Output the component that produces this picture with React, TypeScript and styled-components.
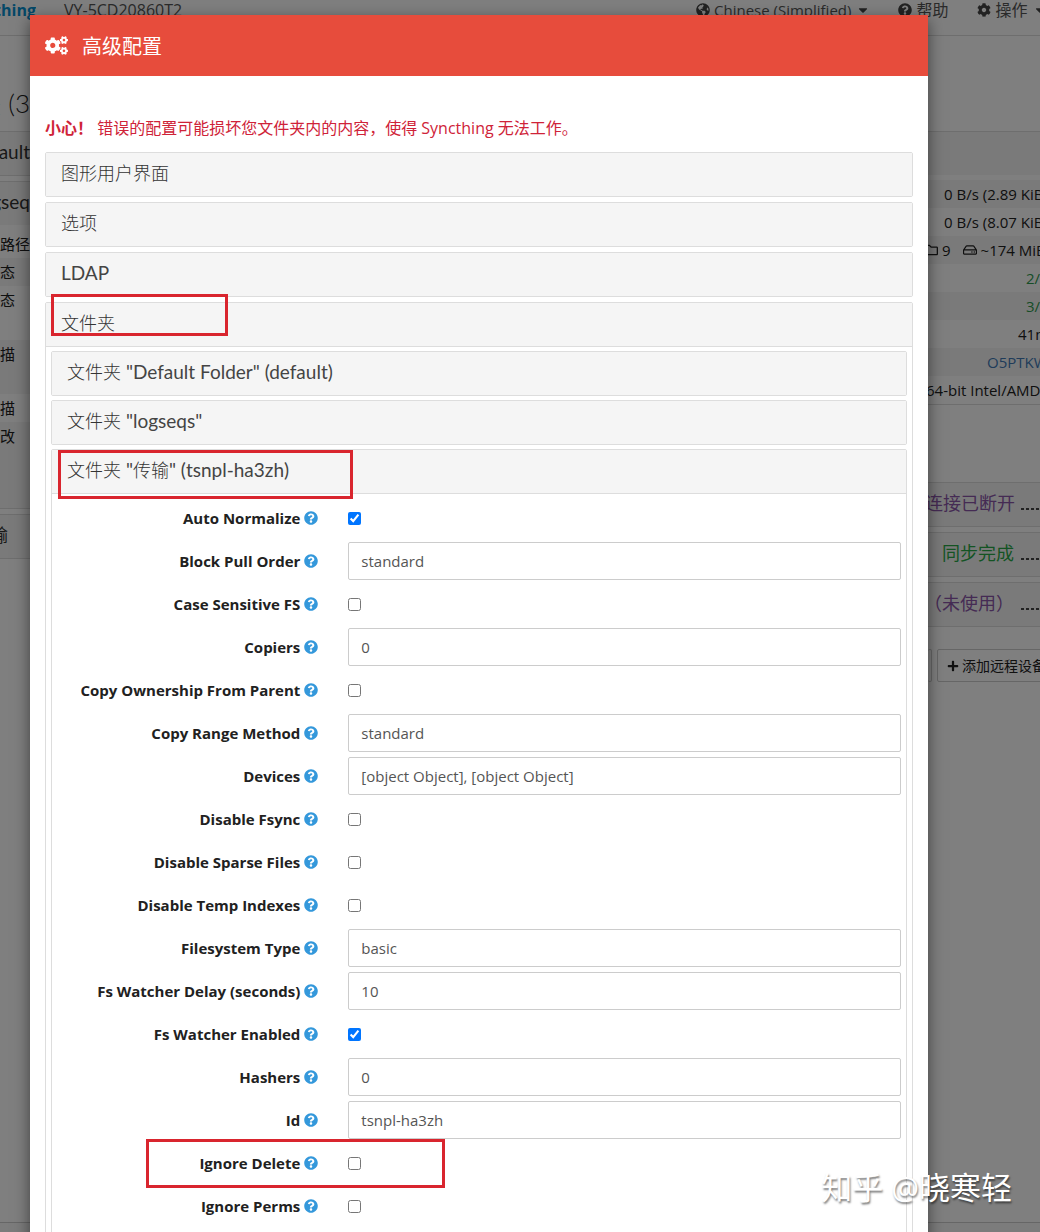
import React from "react";
import styled, { createGlobalStyle } from "styled-components";
import {
  FaCaretDown,
  FaCog,
  FaCogs,
  FaGlobeAmericas,
  FaPlus,
  FaQuestionCircle,
  FaRegFolder,
  FaRegHdd,
} from "react-icons/fa";

const bodyFont = `"Open Sans", "Noto Sans CJK SC", sans-serif`;
const headingFont = `Lato, "Noto Sans CJK SC", sans-serif`;

const GlobalStyle = createGlobalStyle`
  *, *::before, *::after { box-sizing: border-box; }
  body {
    margin: 0;
    background: #fff;
    color: #212121;
    font: 15px/20px ${bodyFont};
  }
  h1, h2, h3, h4, p { margin: 0; }
`;

const Page = styled.div`
  position: relative;
  height: 100vh;
  overflow: hidden;
`;

/* ---------- page behind the dialog ---------- */

const Backdrop = styled.div`
  display: flex;
  flex-direction: column;
  height: 100%;
  overflow: hidden;
  white-space: nowrap;
`;

const Navbar = styled.nav`
  display: flex;
  flex: none;
  align-items: flex-start;
  height: 36px;
  border-bottom: 1px solid #ddd;
  font-size: 16px;
`;

const Brand = styled.a`
  display: flex;
  justify-content: flex-end;
  width: 36px;
  overflow: hidden;
  color: #0891d1;
  font-weight: 700;
  text-decoration: none;
`;

const DeviceName = styled.span`
  flex: 1;
  padding-left: 28px;
  color: #555;
  font-size: 16px;
`;

const NavMenu = styled.div`
  display: flex;
  gap: 29px;
  width: 344px;
`;

const NavLink = styled.a`
  display: flex;
  flex: none;
  align-items: center;
  gap: 4px;
  color: #555;
  font-size: ${(p: { $small?: boolean }) => (p.$small ? 15 : 16)}px;
  text-decoration: none;
  svg { width: 14px; height: 14px; color: #444; }
  svg:last-child:not(:first-child) { width: 12px; margin-left: 2px; }
`;

const Columns = styled.div`
  display: grid;
  grid-template-columns: 30px minmax(0, 1fr) 112px;
  flex: 1;
`;

const Column = styled.section`
  grid-column: ${(p: { $at: number }) => p.$at};
  display: flex;
  flex-direction: column;
  min-width: 0;
  overflow: hidden;
`;

const ColumnTitle = styled.h3`
  display: flex;
  align-items: center;
  justify-content: flex-end;
  height: 95px;
  padding-top: 38px;
  font: 300 26px/40px ${headingFont};
`;

const BackPanel = styled.div`
  flex: none;
  margin-bottom: 5px;
  border: solid #ddd;
  border-width: 1px 0;
`;

const BackHeading = styled.h4`
  display: flex;
  align-items: center;
  justify-content: ${(p: { $end?: boolean; $tone?: string; $indent?: number }) =>
    p.$end ? "flex-end" : "flex-start"};
  height: 43px;
  padding-bottom: 4px;
  text-indent: ${(p) => p.$indent ?? 0}px;
  background: #f5f5f5;
  color: ${(p) => p.$tone ?? "#333"};
  font: 400 ${(p) => (p.$end ? 19 : 18)}px/20px ${headingFont};
`;

const BackRow = styled.div`
  display: flex;
  align-items: ${(p: { $tall?: boolean; $stripe?: boolean; $indent?: number; $tone?: string }) =>
    p.$tall ? "flex-start" : "center"};
  gap: 4px;
  height: ${(p) => (p.$tall ? 54 : 28)}px;
  padding-top: ${(p) => (p.$tall ? 4 : 0)}px;
  text-indent: ${(p) => p.$indent ?? 0}px;
  background: ${(p) => (p.$stripe ? "#f5f5f5" : "#fff")};
  color: ${(p) => p.$tone ?? "#212121"};
  svg { flex: none; width: 14px; height: 14px; }
  svg:first-child { margin-left: -4px; }
  svg:not(:first-child) { margin-left: 8px; }
`;

const BackTable = styled.div`
  padding-top: 5px;
`;

const PanelFooter = styled.div`
  height: 58px;
  background: #f5f5f5;
`;

const Progress = styled.span`
  width: 18px;
  height: 2px;
  margin: 12px 1px 0 auto;
  background: repeating-linear-gradient(90deg, #444 0 3px, transparent 3px 5px);
`;

const Space = styled.div`
  flex: none;
  height: ${(p: { $size: number }) => p.$size}px;
`;

const ButtonBar = styled.div`
  display: flex;
  gap: 5px;
  padding-top: 17px;
`;

const BackButton = styled.button`
  display: flex;
  flex: none;
  align-items: center;
  gap: 3px;
  height: 33px;
  padding: 0 9px;
  border: 1px solid #ccc;
  border-radius: 2px;
  background: #fff;
  color: #222;
  font: 14px/20px ${bodyFont};
  white-space: nowrap;
  &:first-child { width: 4px; padding: 0; border-left: 0; }
  svg { width: 12px; height: 12px; }
`;

const BottomBar = styled.footer`
  flex: none;
  height: 10px;
  border-top: 1px solid #ccc;
  background: #f8f8f8;
`;

/* ---------- dialog ---------- */

const Shade = styled.div`
  position: absolute;
  inset: 0;
  overflow: hidden;
  background: rgba(0, 0, 0, 0.5);
`;

const Dialog = styled.div`
  margin: 15px 112px 0 30px;
  background: #fff;
  box-shadow: 0 5px 15px rgba(0, 0, 0, 0.5);
`;

const DialogHeader = styled.header`
  display: flex;
  align-items: center;
  gap: 14px;
  height: 61px;
  padding: 0 15px;
  background: #e74c3c;
  color: #fff;
  svg { width: 23px; height: 23px; }
`;

const DialogTitle = styled.h2`
  font: 400 20px/24px ${headingFont};
`;

const DialogBody = styled.div`
  padding: 41px 15px 0;
`;

const Warning = styled.p`
  margin-bottom: 13px;
  color: #cf2338;
  font-size: 16px;
  line-height: 22px;
`;

const PanelStack = styled.div`
  display: flex;
  flex-direction: column;
  gap: ${(p: { $nested?: boolean }) => (p.$nested ? 4 : 5)}px;
  padding: ${(p) => (p.$nested ? "4px 5px 0" : "0")};
`;

const Panel = styled.section`
  border: 1px solid #ddd;
  border-radius: 2px;
`;

const PanelHeading = styled.h4`
  position: relative;
  background: #f5f5f5;
  border-bottom: ${(p: { $open?: boolean }) => (p.$open ? "1px solid #ddd" : "0")};
`;

const PanelToggle = styled.button`
  display: block;
  width: 100%;
  height: 43px;
  padding: 0 15px 4px;
  border: 0;
  background: none;
  color: #333;
  font: 300 18px/20px ${headingFont};
  text-align: left;
`;

const Latin = styled.span`
  color: #444;
  font-size: 19px;
  font-weight: 400;
`;

const Form = styled.form`
  display: flex;
  flex-direction: column;
  gap: 5px;
  padding: 5px 5px 40px;
`;

const FieldRow = styled.div`
  position: relative;
  display: grid;
  grid-template-columns: 4fr 8fr;
  align-items: center;
  height: 38px;
  margin: 0 -15px;
`;

const FieldName = styled.div`
  display: flex;
  align-items: center;
  justify-content: flex-end;
  gap: 4px;
  padding: 0 15px;
  color: #212121;
  font-weight: 700;
  white-space: nowrap;
`;

const HelpLink = styled.a`
  display: flex;
  color: #3498db;
  svg { width: 14px; height: 14px; }
`;

const FieldControl = styled.div`
  display: flex;
  padding: 0 15px;
`;

const TextInput = styled.input`
  width: 100%;
  height: 38px;
  padding: 0 12px;
  border: 1px solid #ccc;
  border-radius: 2px;
  background: #fff;
  color: #555;
  font: 15px/20px ${bodyFont};
`;

const Tick = styled.input`
  width: 13px;
  height: 13px;
  margin: 0;
`;

const Mark = styled.span`
  position: absolute;
  z-index: 1;
  left: ${(p: { $box: [number, number, number, number] }) => p.$box[0]}px;
  top: ${(p) => p.$box[1]}px;
  width: ${(p) => p.$box[2]}px;
  height: ${(p) => p.$box[3]}px;
  border: 3px solid #d9252e;
  pointer-events: none;
`;

const Watermark = styled.div`
  position: absolute;
  right: 28px;
  bottom: 25px;
  color: #fff;
  font: 400 31px/40px ${bodyFont};
  text-shadow: 1px 2px 2px rgba(0, 0, 0, 0.5);
`;

type Field = { name: string; value: string | boolean; marked?: boolean };

const fields: Field[] = [
  { name: "Auto Normalize", value: true },
  { name: "Block Pull Order", value: "standard" },
  { name: "Case Sensitive FS", value: false },
  { name: "Copiers", value: "0" },
  { name: "Copy Ownership From Parent", value: false },
  { name: "Copy Range Method", value: "standard" },
  { name: "Devices", value: "[object Object], [object Object]" },
  { name: "Disable Fsync", value: false },
  { name: "Disable Sparse Files", value: false },
  { name: "Disable Temp Indexes", value: false },
  { name: "Filesystem Type", value: "basic" },
  { name: "Fs Watcher Delay (seconds)", value: "10" },
  { name: "Fs Watcher Enabled", value: true },
  { name: "Hashers", value: "0" },
  { name: "Id", value: "tsnpl-ha3zh" },
  { name: "Ignore Delete", value: false, marked: true },
  { name: "Ignore Perms", value: false },
];

function SettingField({ field }: { field: Field }) {
  const id = field.name.toLowerCase().replace(/[^a-z]+/g, "-");
  return (
    <FieldRow>
      <FieldName>
        <label htmlFor={id}>{field.name}</label>
        <HelpLink href="#" aria-label={`Help: ${field.name}`}>
          <FaQuestionCircle />
        </HelpLink>
      </FieldName>
      <FieldControl>
        {typeof field.value === "boolean" ? (
          <Tick id={id} type="checkbox" defaultChecked={field.value} />
        ) : (
          <TextInput id={id} type="text" defaultValue={field.value} />
        )}
      </FieldControl>
      {field.marked && <Mark $box={[104, -5, 299, 49]} />}
    </FieldRow>
  );
}

function SettingsPanel({
  title,
  mark,
  children,
}: {
  title: React.ReactNode;
  mark?: [number, number, number, number];
  children?: React.ReactNode;
}) {
  return (
    <Panel>
      <PanelHeading $open={!!children}>
        <PanelToggle type="button">{title}</PanelToggle>
        {mark && <Mark $box={mark} />}
      </PanelHeading>
      {children}
    </Panel>
  );
}

function FoldersColumn() {
  return (
    <Column $at={1}>
      <ColumnTitle>文件夹 (3</ColumnTitle>
      <BackPanel>
        <BackHeading $end>Default</BackHeading>
      </BackPanel>
      <BackPanel>
        <BackHeading $end>logseq</BackHeading>
        <BackTable>
          <BackRow>路径</BackRow>
          <BackRow $stripe>态</BackRow>
          <BackRow $tall>态</BackRow>
          <BackRow $tall $stripe>描</BackRow>
          <BackRow>描</BackRow>
          <BackRow $stripe>改</BackRow>
        </BackTable>
        <PanelFooter />
      </BackPanel>
      <BackPanel>
        <BackHeading $indent={-10}>输</BackHeading>
      </BackPanel>
    </Column>
  );
}

function DevicesColumn() {
  return (
    <Column $at={3}>
      <Space $size={95} />
      <BackPanel>
        <BackHeading />
        <BackTable>
          <BackRow $stripe $indent={16}>0 B/s (2.89 KiB</BackRow>
          <BackRow $indent={16}>0 B/s (8.07 KiB</BackRow>
          <BackRow $stripe>
            <FaRegFolder />9<FaRegHdd />~174 MiB
          </BackRow>
          <BackRow $indent={98} $tone="#2e9a4f">2/3</BackRow>
          <BackRow $stripe $indent={98} $tone="#2e9a4f">3/3</BackRow>
          <BackRow $indent={90}>41m</BackRow>
          <BackRow $stripe $indent={59} $tone="#4179b5">O5PTKW</BackRow>
          <BackRow $indent={-2}>64-bit Intel/AMD</BackRow>
        </BackTable>
      </BackPanel>
      <Space $size={72} />
      <BackPanel>
        <BackHeading $tone="#8a56a8" $indent={-3}>连接已断开<Progress /></BackHeading>
      </BackPanel>
      <BackPanel>
        <BackHeading $tone="#29a847" $indent={14}>同步完成<Progress /></BackHeading>
      </BackPanel>
      <BackPanel>
        <BackHeading $tone="#8a56a8" $indent={-4}>（未使用）<Progress /></BackHeading>
      </BackPanel>
      <ButtonBar>
        <BackButton type="button" aria-label="设备" />
        <BackButton type="button"><FaPlus />添加远程设备</BackButton>
      </ButtonBar>
    </Column>
  );
}

export default function App() {
  return (
    <Page>
      <GlobalStyle />
      <Backdrop>
        <Navbar>
          <Brand href="#">Syncthing</Brand>
          <DeviceName>VY-5CD20860T2</DeviceName>
          <NavMenu>
            <NavLink href="#" $small><FaGlobeAmericas />Chinese (Simplified)<FaCaretDown /></NavLink>
            <NavLink href="#"><FaQuestionCircle />帮助</NavLink>
            <NavLink href="#"><FaCog />操作<FaCaretDown /></NavLink>
          </NavMenu>
        </Navbar>
        <Columns>
          <FoldersColumn />
          <DevicesColumn />
        </Columns>
        <BottomBar />
      </Backdrop>
      <Shade>
        <Dialog role="dialog" aria-labelledby="dialog-title">
          <DialogHeader>
            <FaCogs />
            <DialogTitle id="dialog-title">高级配置</DialogTitle>
          </DialogHeader>
          <DialogBody>
            <Warning>
              <strong>小心！</strong> 错误的配置可能损坏您文件夹内的内容，使得 Syncthing 无法工作。
            </Warning>
            <PanelStack>
              <SettingsPanel title="图形用户界面" />
              <SettingsPanel title="选项" />
              <SettingsPanel title={<Latin>LDAP</Latin>} />
              <SettingsPanel title="文件夹" mark={[5, -9, 177, 42]}>
                <PanelStack $nested>
                  <SettingsPanel
                    title={<>文件夹 <Latin>"Default Folder" (default)</Latin></>}
                  />
                  <SettingsPanel title={<>文件夹 <Latin>"logseqs"</Latin></>} />
                  <SettingsPanel
                    title={<>文件夹 <Latin>"</Latin>传输<Latin>" (tsnpl-ha3zh)</Latin></>}
                    mark={[6, 0, 295, 49]}
                  >
                    <Form>
                      {fields.map((field) => (
                        <SettingField key={field.name} field={field} />
                      ))}
                    </Form>
                  </SettingsPanel>
                </PanelStack>
              </SettingsPanel>
            </PanelStack>
          </DialogBody>
        </Dialog>
      </Shade>
      <Watermark>知乎 @晓寒轻</Watermark>
    </Page>
  );
}
